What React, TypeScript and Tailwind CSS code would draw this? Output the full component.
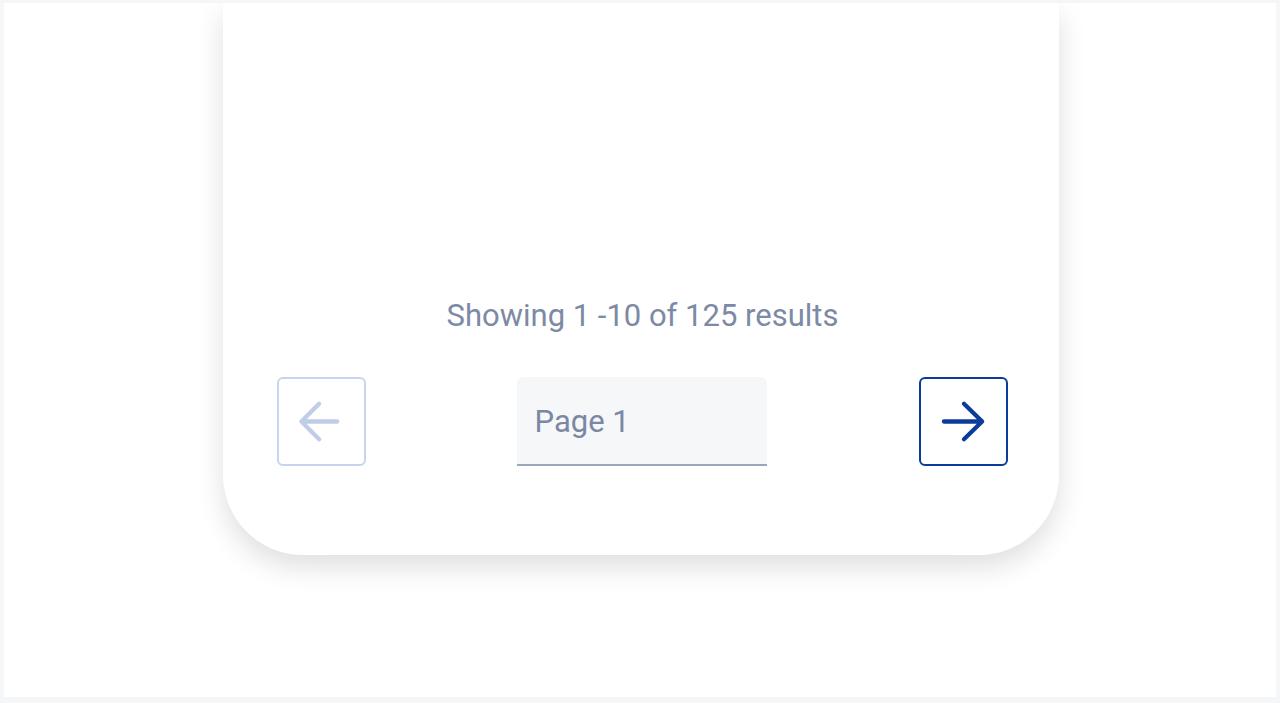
import React from "react";

function Arrow({ dir, color }: { dir: "left" | "right"; color: string }) {
  return (
    <svg width="89" height="89" viewBox="0 0 89 89" fill="none">
      {dir === "right" ? (
        <path d="M24 44.5H64M45 26L64 44.5L45 63" stroke={color} strokeWidth="4.5" strokeLinecap="round" strokeLinejoin="round" />
      ) : (
        <path d="M61 44.5H24M42 26L23.5 44.5L42 63" stroke={color} strokeWidth="4.5" strokeLinecap="round" strokeLinejoin="round" />
      )}
    </svg>
  );
}

export default function App() {
  return (
    <div
      className="w-[1280px] h-[703px] bg-white border-l-4 border-r-4 border-t-[3px] border-b-[6px] border-[#f4f6f8] overflow-hidden"
      style={{ fontFamily: "Roboto, 'Noto Sans', sans-serif" }}
    >
      <div className="ml-[219px] w-[836px] h-[552px] bg-white rounded-b-[80px] shadow-[0_12px_28px_rgba(0,0,0,0.13)] flex flex-col justify-end pl-[54px] pr-[51px] pb-[89px]">
        <div className="text-center text-[31px] leading-[36px] text-[#7d8aa5] mb-[43px]">
          Showing 1 -10 of 125 results
        </div>
        <div className="flex items-center justify-between">
          <button className="w-[89px] h-[89px] rounded-[6px] border-2 border-[#c6d4ee] bg-white flex items-center justify-center">
            <Arrow dir="left" color="#bfcde9" />
          </button>
          <div className="w-[250px] h-[89px] bg-[#f6f7f9] rounded-t-[6px] border-b-2 border-[#9ba6bc] flex items-center pl-[18px] pt-[3px] text-[31px] text-[#7b88a4] -translate-x-px">
            Page 1
          </div>
          <button className="w-[89px] h-[89px] rounded-[6px] border-2 border-[#0b3c9c] bg-white flex items-center justify-center">
            <Arrow dir="right" color="#0b3c9c" />
          </button>
        </div>
      </div>
    </div>
  );
}
